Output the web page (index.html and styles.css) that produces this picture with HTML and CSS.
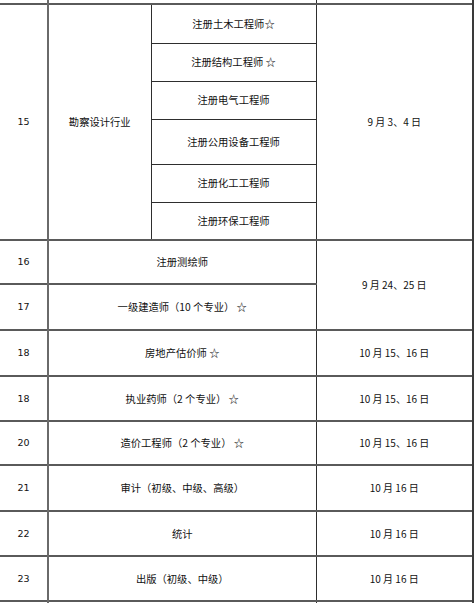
FILE: index.html
```html
<!DOCTYPE html>
<html lang="zh">
<head>
<meta charset="utf-8">
<link rel="stylesheet" href="styles.css">
</head>
<body>
<div class="sheet">
<table class="exam">
  <colgroup>
    <col class="c-no">
    <col class="c-cat">
    <col class="c-sub">
    <col class="c-date">
  </colgroup>
  <tr class="r-prev main"><td class="no"></td><td colspan="2"></td><td class="date"></td></tr>
  <tr class="r-s1 main">
    <td class="no" rowspan="6">15</td>
    <td class="cat" rowspan="6">勘察设计行业</td>
    <td class="sub">注册土木工程师☆</td>
    <td class="date" rowspan="6">9 月 3、4 日</td>
  </tr>
  <tr class="r-s2"><td class="sub">注册结构工程师 ☆</td></tr>
  <tr class="r-s3"><td class="sub">注册电气工程师</td></tr>
  <tr class="r-s4"><td class="sub">注册公用设备工程师</td></tr>
  <tr class="r-s5"><td class="sub">注册化工工程师</td></tr>
  <tr class="r-s6"><td class="sub">注册环保工程师</td></tr>
  <tr class="r-44 main"><td class="no">16</td><td colspan="2">注册测绘师</td><td class="date" rowspan="2">9 月 24、25 日</td></tr>
  <tr class="r-46 main"><td class="no">17</td><td colspan="2">一级建造师（10 个专业） ☆</td></tr>
  <tr class="r-46 main"><td class="no">18</td><td colspan="2">房地产估价师 ☆</td><td class="date">10 月 15、16 日</td></tr>
  <tr class="r-45 main"><td class="no">18</td><td colspan="2">执业药师（2 个专业） ☆</td><td class="date">10 月 15、16 日</td></tr>
  <tr class="r-44 main"><td class="no">20</td><td colspan="2">造价工程师（2 个专业） ☆</td><td class="date">10 月 15、16 日</td></tr>
  <tr class="r-46 main"><td class="no">21</td><td colspan="2">审计（初级、中级、高级）</td><td class="date">10 月 16 日</td></tr>
  <tr class="r-45 main"><td class="no">22</td><td colspan="2">统计</td><td class="date">10 月 16 日</td></tr>
  <tr class="r-45 main"><td class="no">23</td><td colspan="2">出版（初级、中级）</td><td class="date">10 月 16 日</td></tr>
  <tr class="r-45 main"><td class="no"></td><td colspan="2"></td><td class="date"></td></tr>
</table>
</div>
</body>
</html>
```

FILE: styles.css
```css
html, body {
  margin: 0;
  padding: 0;
  background: #ffffff;
}

.sheet {
  width: 474px;
  height: 603px;
  overflow: hidden;
}

.exam {
  border-collapse: collapse;
  table-layout: fixed;
  width: 473px;
  margin-top: -37px;
  font-family: "Noto Sans CJK SC", "DejaVu Sans", sans-serif;
  font-size: 10.3px;
  color: #111111;
}

.c-no { width: 48px; }
.c-cat { width: 103px; }
.c-sub { width: 165px; }
.c-date { width: 157px; }

.exam td {
  border: 1px solid #2e2e2e;
  text-align: center;
  vertical-align: middle;
  padding: 0;
  line-height: 12px;
}

.exam tr.main td {
  border-top: 2px solid #5a5a5a;
}

.exam td.no {
  border-left: 0;
  border-right: 2px solid #6a6a6a;
  font-family: "DejaVu Sans", sans-serif;
  font-size: 9.5px;
}

.exam td.date {
  border-right: 2px solid #3a3a3a;
  font-size: 10px;
}

.r-prev { height: 40px; }
.r-s1 { height: 39px; }
.r-s2 { height: 38px; }
.r-s3 { height: 38px; }
.r-s4 { height: 45px; }
.r-s5 { height: 38px; }
.r-s6 { height: 38px; }
.r-44 { height: 44px; }
.r-45 { height: 45px; }
.r-46 { height: 46px; }
```
